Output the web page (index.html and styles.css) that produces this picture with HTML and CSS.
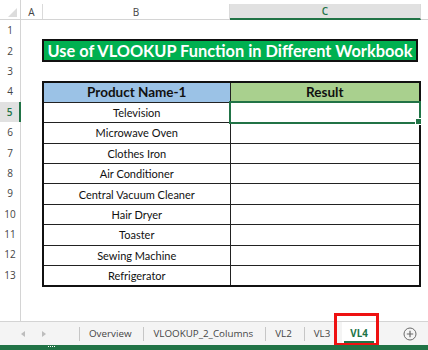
FILE: index.html
```html
<!DOCTYPE html>
<html lang="en">
<head>
  <meta charset="UTF-8">
  <title>VL4 - VLOOKUP in Different Workbook</title>
  <link rel="stylesheet" href="styles.css">
</head>
<body>
  <div class="app">
    <!-- Arkusz -->
    <div class="sheet">
      <div class="corner">
        <svg width="21" height="20" viewBox="0 0 21 20"><polygon points="17,8 17,17 8,17" fill="#dcdcdc"/></svg>
      </div>
      <div class="col-heads">
        <div class="col-head col-a">A</div>
        <div class="col-head col-b">B</div>
        <div class="col-head col-c active">C</div>
        <div class="col-head col-d"></div>
      </div>

      <div class="row-heads">
        <div class="row-head">1</div>
        <div class="row-head">2</div>
        <div class="row-head">3</div>
        <div class="row-head">4</div>
        <div class="row-head active">5</div>
        <div class="row-head">6</div>
        <div class="row-head">7</div>
        <div class="row-head">8</div>
        <div class="row-head">9</div>
        <div class="row-head">10</div>
        <div class="row-head">11</div>
        <div class="row-head">12</div>
        <div class="row-head">13</div>
      </div>

      <div class="cells">
        <div class="title">Use of VLOOKUP Function in Different Workbook</div>
        <table class="data">
          <thead>
            <tr>
              <th class="head-b">Product Name-1</th>
              <th class="head-c">Result</th>
            </tr>
          </thead>
          <tbody>
            <tr><td>Television</td><td class="selected"></td></tr>
            <tr><td>Microwave Oven</td><td></td></tr>
            <tr><td>Clothes Iron</td><td></td></tr>
            <tr><td>Air Conditioner</td><td></td></tr>
            <tr><td>Central Vacuum Cleaner</td><td></td></tr>
            <tr><td>Hair Dryer</td><td></td></tr>
            <tr><td>Toaster</td><td></td></tr>
            <tr><td>Sewing Machine</td><td></td></tr>
            <tr><td>Refrigerator</td><td></td></tr>
          </tbody>
        </table>
      </div>
    </div>

    <!-- Zakładki arkuszy -->
    <div class="tabbar">
      <div class="tab-nav">
        <span class="arrow left"></span>
        <span class="arrow right"></span>
      </div>
      <span class="sep"></span>
      <div class="tab">Overview</div>
      <span class="sep"></span>
      <div class="tab">VLOOKUP_2_Columns</div>
      <span class="sep"></span>
      <div class="tab">VL2</div>
      <span class="sep"></span>
      <div class="tab">VL3</div>
      <div class="tab active">VL4<span class="mark"></span></div>
      <div class="add-sheet">
        <svg width="14" height="14" viewBox="0 0 14 14">
          <circle cx="7" cy="7" r="6" fill="none" stroke="#6a6a6a" stroke-width="1"/>
          <path d="M7 3.8v6.4M3.8 7h6.4" stroke="#6a6a6a" stroke-width="1.2"/>
        </svg>
      </div>
    </div>

    <div class="statusbar"><span class="status-icon"></span></div>
  </div>
</body>
</html>
```

FILE: styles.css
```css
:root {
  --excel-green: #217346;
  --grid-line: #d4d4d4;
  --head-text: #444;
  --title-green: #00b050;
  --head-blue: #9bc2e6;
  --head-green: #a9d08e;
  --row-h: 20.4px;
}
body {
  margin: 0;
  background-color: #fff;
  font-family: Lato, 'Liberation Sans', sans-serif;
}
.app {
  width: 428px;
  height: 350px;
  overflow: hidden;
  display: flex;
  flex-direction: column;
}
.sheet {
  flex: 1;
  display: grid;
  grid-template-columns: 21px 1fr;
  grid-template-rows: 20px 1fr;
  background-color: #fff;
}
.corner {
  border-right: 1px solid var(--grid-line);
  border-bottom: 1px solid var(--grid-line);
  box-sizing: border-box;
}
.corner svg {
  display: block;
}
.col-heads {
  display: flex;
  padding-top: 4px;
  border-bottom: 1px solid var(--grid-line);
  font-family: 'Open Sans', sans-serif;
  font-size: 10px;
  color: var(--head-text);
}
.col-head {
  display: flex;
  align-items: center;
  justify-content: center;
  border-right: 1px solid #dadada;
  box-sizing: border-box;
}
.col-a { width: 22px; }
.col-b { width: 187px; }
.col-c { width: 191px; }
.col-d { flex: 1; border-right: none; }
.col-head.active {
  background-color: #e1e1e1;
  color: var(--excel-green);
  font-weight: 600;
  border-bottom: 2px solid var(--excel-green);
  margin-bottom: -1px;
}
.row-heads {
  border-right: 1px solid var(--grid-line);
  font-family: 'Open Sans', sans-serif;
  font-size: 10px;
  color: var(--head-text);
}
.row-head {
  height: var(--row-h);
  display: flex;
  align-items: center;
  justify-content: center;
  box-sizing: border-box;
}
.row-head.active {
  background-color: #e1e1e1;
  color: var(--excel-green);
  font-weight: 600;
  border-right: 2px solid var(--excel-green);
  margin-right: -1px;
}
.cells {
  padding-left: 21px;
  padding-top: 19px;
}
.title {
  width: 376px;
  height: 23px;
  box-sizing: border-box;
  border: 2px solid #111;
  background-color: var(--title-green);
  color: #fff;
  font-weight: 700;
  font-size: 16.35px;
  text-align: center;
  line-height: 19px;
}
.data {
  margin-top: 19px;
  width: 379px;
  border-collapse: collapse;
  border: 2px solid #111;
  table-layout: fixed;
  font-size: 11px;
  color: #111;
}
.data th, .data td {
  height: var(--row-h);
  padding: 0;
  border: 1px solid #222;
  text-align: center;
  box-sizing: border-box;
}
.data th {
  font-size: 13.5px;
  font-weight: 700;
}
.head-b {
  width: 187px;
  background-color: var(--head-blue);
}
.head-c {
  background-color: var(--head-green);
}
.data td.selected {
  position: relative;
  outline: 2px solid var(--excel-green);
  outline-offset: -1px;
}
.data td.selected::after {
  content: '';
  position: absolute;
  right: -3px;
  bottom: -3px;
  width: 5px;
  height: 5px;
  background-color: var(--excel-green);
  border: 1px solid #fff;
}
.tabbar {
  height: 23px;
  display: flex;
  align-items: center;
  background-color: #f4f4f4;
  border-top: 1px solid var(--grid-line);
  font-family: 'Open Sans', sans-serif;
  font-size: 9.8px;
  color: var(--head-text);
}
.tab-nav {
  width: 79px;
  display: flex;
  align-items: center;
  gap: 17px;
  padding-left: 21px;
  box-sizing: border-box;
}
.arrow {
  width: 0;
  height: 0;
  border-top: 3px solid transparent;
  border-bottom: 3px solid transparent;
}
.arrow.left { border-right: 4px solid #bdbdbd; }
.arrow.right { border-left: 4px solid #bdbdbd; }
.sep {
  width: 1px;
  height: 14px;
  background-color: #c6c6c6;
}
.tab {
  padding: 0 12px 0 9px;
  line-height: 23px;
}
.tab.active {
  position: relative;
  padding: 0 8px;
  background-color: #fff;
  color: var(--excel-green);
  font-weight: 700;
}
.tab.active::before {
  content: '';
  position: absolute;
  left: 2px;
  right: 2px;
  bottom: 2px;
  height: 2px;
  background-color: var(--excel-green);
}
.mark {
  position: absolute;
  left: -8px;
  top: -9px;
  width: 45px;
  height: 33px;
  border: 3px solid #ee1111;
  box-sizing: border-box;
}
.add-sheet {
  margin-left: 27px;
  display: flex;
}
.statusbar {
  height: 5px;
  background-color: var(--excel-green);
  position: relative;
}
.status-icon {
  position: absolute;
  left: 48px;
  top: 1px;
  width: 7px;
  height: 2px;
  border-top: 1px dotted #fff;
}
```
